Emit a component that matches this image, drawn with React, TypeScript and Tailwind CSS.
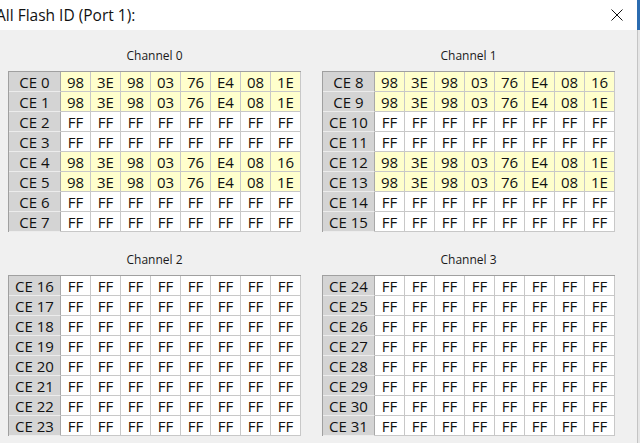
import React from "react";

const A = ["98", "3E", "98", "03", "76", "E4", "08", "1E"];
const B = ["98", "3E", "98", "03", "76", "E4", "08", "16"];
const F = ["FF", "FF", "FF", "FF", "FF", "FF", "FF", "FF"];

const channels: { name: string; start: number; rows: string[][] }[] = [
  { name: "Channel 0", start: 0, rows: [A, A, F, F, B, A, F, F] },
  { name: "Channel 1", start: 8, rows: [B, A, F, F, A, A, F, F] },
  { name: "Channel 2", start: 16, rows: [F, F, F, F, F, F, F, F] },
  { name: "Channel 3", start: 24, rows: [F, F, F, F, F, F, F, F] },
];

function Channel({ name, start, rows }: { name: string; start: number; rows: string[][] }) {
  return (
    <div className="flex flex-col">
      <div className="h-[16px] leading-[16px] text-[12px] text-center text-[#1a1a1a] mb-[7px]">{name}</div>
      <div className="flex flex-col border-l border-t border-[#a0a0a0] w-[293px]">
        {rows.map((r, i) => {
          const hi = r[0] !== "FF";
          return (
            <div key={i} className="flex h-[20px]">
              <div className="box-border w-[52px] h-[20px] border-r border-b border-r-[#a8a8a8] border-b-[#ececec] bg-[#d4d4d4] text-[15px] leading-[20px] text-center text-[#111]">
                CE {start + i}
              </div>
              {r.map((v, j) => (
                <div
                  key={j}
                  className={
                    hi
                      ? "box-border w-[30px] h-[20px] border-r border-b border-[#c8c8c8] bg-[#ffffcc] text-[15px] leading-[20px] text-center text-[#111]"
                      : "box-border w-[30px] h-[20px] border-r border-b border-[#c8c8c8] bg-white text-[15px] leading-[20px] text-center text-[#111]"
                  }
                >
                  {v}
                </div>
              ))}
            </div>
          );
        })}
      </div>
    </div>
  );
}

export default function App() {
  return (
    <div className="flex w-[640px] h-[443px] overflow-hidden" style={{ fontFamily: '"Open Sans", "Noto Sans", sans-serif' }}>
      <div className="flex flex-col flex-1">
        <div className="flex items-center justify-between h-[30px] bg-white pr-[14px]">
          <div className="-ml-[4px] text-[15.5px] text-[#111] leading-[20px]">All Flash ID (Port 1):</div>
          <svg width="12" height="12" viewBox="0 0 12 12">
            <path d="M0.5 0.5 L11.5 11.5 M11.5 0.5 L0.5 11.5" stroke="#111" strokeWidth="1" fill="none" />
          </svg>
        </div>
        <div className="flex-1 bg-[#f0f0f0] pt-[18px] pl-[8px]">
          <div className="grid grid-cols-[293px_293px] gap-x-[21px] gap-y-[20px]">
            {channels.map((c) => (
              <Channel key={c.name} {...c} />
            ))}
          </div>
        </div>
      </div>
      <div className="flex flex-col w-[3px]">
        <div className="h-[30px] bg-[#2b6cb0]" />
        <div className="flex-1 bg-[#e6e6e6] border-l border-[#c4c4c4]" />
      </div>
    </div>
  );
}
